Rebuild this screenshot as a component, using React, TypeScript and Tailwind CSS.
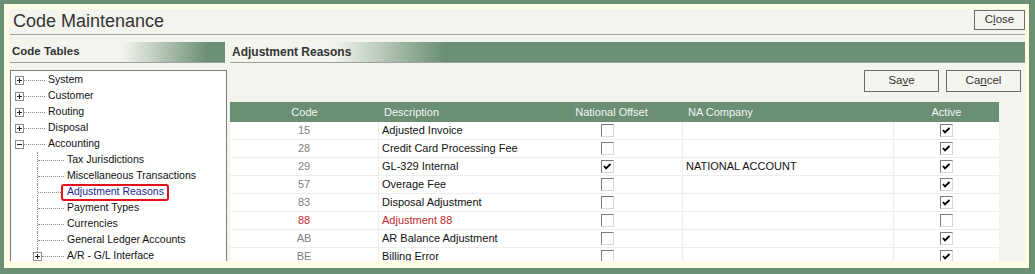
import React from "react";

const FONT = { fontFamily: '"Liberation Sans", Arial, sans-serif' };

function Check({ on }: { on: boolean }) {
  return (
    <div className="w-[13px] h-[13px] bg-white border border-t-[#7a7a7a] border-l-[#7a7a7a] border-r-[#d8d8d8] border-b-[#d8d8d8] flex items-center justify-center">
      {on && (
        <svg width="11" height="11" viewBox="0 0 11 11">
          <polyline points="2,5 4,7.5 8.5,3" fill="none" stroke="#000" strokeWidth="1.8" />
        </svg>
      )}
    </div>
  );
}

function Expander({ open }: { open: boolean }) {
  return (
    <div className="w-[9px] h-[9px] border border-[#8c8c8c] bg-white relative shrink-0">
      <div className="absolute left-[1px] right-[1px] top-[3px] h-[1px] bg-[#222]" />
      {!open && <div className="absolute top-[1px] bottom-[1px] left-[3px] w-[1px] bg-[#222]" />}
    </div>
  );
}

type TreeItem = { label: string; level: 0 | 1; exp?: "open" | "closed"; sel?: boolean };

const tree: TreeItem[] = [
  { label: "System", level: 0, exp: "closed" },
  { label: "Customer", level: 0, exp: "closed" },
  { label: "Routing", level: 0, exp: "closed" },
  { label: "Disposal", level: 0, exp: "closed" },
  { label: "Accounting", level: 0, exp: "open" },
  { label: "Tax Jurisdictions", level: 1 },
  { label: "Miscellaneous Transactions", level: 1 },
  { label: "Adjustment Reasons", level: 1, sel: true },
  { label: "Payment Types", level: 1 },
  { label: "Currencies", level: 1 },
  { label: "General Ledger Accounts", level: 1 },
  { label: "A/R - G/L Interface", level: 1, exp: "closed" },
];

function TreeRow({ item }: { item: TreeItem }) {
  if (item.level === 0) {
    return (
      <div className="h-[16px] shrink-0 flex items-center pl-[4px] text-[10.5px] text-[#111]">
        <Expander open={item.exp === "open"} />
        <div className="w-[21px] border-t border-dotted border-[#8a8a8a]" />
        <span className="ml-[3px] whitespace-nowrap">{item.label}</span>
      </div>
    );
  }
  return (
    <div className="h-[16px] shrink-0 flex items-center text-[10.5px] text-[#111]">
      <div className="w-[26px] shrink-0" />
      <div className="relative w-[1px] h-full shrink-0 border-l border-dotted border-[#8a8a8a]">
        {item.exp && (
          <div className="absolute left-[-5px] top-[3.5px]">
            <Expander open={item.exp === "open"} />
          </div>
        )}
      </div>
      {item.exp ? (
        <div className="ml-[4px] w-[22px] border-t border-dotted border-[#8a8a8a]" />
      ) : (
        <div className={(item.sel ? "w-[23px]" : "w-[26px]") + " border-t border-dotted border-[#8a8a8a]"} />
      )}
      {item.sel ? (
        <span className="h-[17px] flex items-center border-2 border-[#e3111c] rounded-[3px] pl-[4px] pr-[3px] text-[#1c2a96] whitespace-nowrap">
          {item.label}
        </span>
      ) : (
        <span className="ml-[3px] whitespace-nowrap">{item.label}</span>
      )}
    </div>
  );
}

type Row = { code: string; desc: string; nat: boolean; na: string; active: boolean; red?: boolean };

const rows: Row[] = [
  { code: "15", desc: "Adjusted Invoice", nat: false, na: "", active: true },
  { code: "28", desc: "Credit Card Processing Fee", nat: false, na: "", active: true },
  { code: "29", desc: "GL-329 Internal", nat: true, na: "NATIONAL ACCOUNT", active: true },
  { code: "57", desc: "Overage Fee", nat: false, na: "", active: true },
  { code: "83", desc: "Disposal Adjustment", nat: false, na: "", active: true },
  { code: "88", desc: "Adjustment 88", nat: false, na: "", active: false, red: true },
  { code: "AB", desc: "AR Balance Adjustment", nat: false, na: "", active: true },
  { code: "BE", desc: "Billing Error", nat: false, na: "", active: true },
];

function Btn({ children, w }: { children: React.ReactNode; w: string }) {
  return (
    <div className={w + " h-[22px] border border-[#6c6c6c] bg-[#f4f4ef] flex items-center justify-center text-[11.5px] text-[#333]"}>
      {children}
    </div>
  );
}

export default function App() {
  return (
    <div style={FONT} className="w-[1035px] h-[274px] bg-[#6a8f72] pt-[4px] pl-[4px] pr-[6px] pb-[6px]">
      <div className="w-full h-full bg-[#fffde3] pt-[5px] pl-[5px] pr-[4px] pb-[7px]">
        <div className="w-full h-full bg-[#f4f4ef] overflow-hidden flex flex-col">
          {/* Title */}
          <div className="ml-[1px] h-[26px] shrink-0 flex items-start justify-between border-b border-[#a2a2a2]">
            <div className="pl-[3px] pt-[1px] text-[18px] leading-[22px] text-[#333]">Code Maintenance</div>
            <div className="mt-[1px]">
              <div className="w-[51px] h-[20px] border border-[#6c6c6c] bg-[#f4f4ef] flex items-center justify-center text-[11.5px] text-[#333]">
                C<span className="underline">l</span>ose
              </div>
            </div>
          </div>

          <div className="mt-[7px] flex gap-[3px] shrink-0">
            {/* Left column */}
            <div className="ml-[1px] w-[217px] shrink-0 flex flex-col">
              <div className="w-[215px] h-[21px] shrink-0 flex items-center pl-[2px] border-b border-[#a2a2a2] bg-[linear-gradient(to_right,#f4f4ef_52%,#6a8f72_92%)] text-[11.5px] font-bold text-[#333]">
                Code Tables
              </div>
              <div className="mt-[7px] h-[220px] shrink-0 flex flex-col pt-[1px] bg-white border border-[#7c7c7c]">
                {tree.map((t) => (
                  <TreeRow key={t.label} item={t} />
                ))}
              </div>
            </div>

            {/* Right column */}
            <div className="flex-1 flex flex-col">
              <div className="h-[21px] shrink-0 flex items-center pl-[2px] border-b border-[#a2a2a2] bg-[linear-gradient(to_right,#f4f4ef_13%,#6a8f72_27%)] text-[12px] font-bold text-[#333]">
                Adjustment Reasons
              </div>
              <div className="mt-[7px] shrink-0 flex justify-end gap-[7px] pr-[4px]">
                <Btn w="w-[75px]">
                  Sa<span className="underline">v</span>e
                </Btn>
                <Btn w="w-[75px]">
                  Ca<span className="underline">n</span>cel
                </Btn>
              </div>
              <div className="mt-[10px] shrink-0 w-[769px] text-[11px]">
                <div className="h-[20px] bg-[#6a8f72] flex items-center text-[#f2f6f2]">
                  <div className="w-[149px] text-center">Code</div>
                  <div className="w-[161px] pl-[5px]">Description</div>
                  <div className="w-[143px] text-center">National Offset</div>
                  <div className="w-[211px] pl-[5px]">NA Company</div>
                  <div className="w-[105px] text-center">Active</div>
                </div>
                {rows.map((r) => (
                  <div key={r.code} className="h-[18px] bg-white flex items-stretch border-b border-[#ededed]">
                    <div className={"w-[149px] flex items-center justify-center border-r border-[#ededed] " + (r.red ? "text-[#c0282d]" : "text-[#808080]")}>
                      {r.code}
                    </div>
                    <div className={"w-[161px] flex items-center pl-[3px] whitespace-nowrap " + (r.red ? "text-[#c0282d]" : "text-[#111]")}>
                      {r.desc}
                    </div>
                    <div className="w-[143px] flex items-center justify-center pr-[8px] border-r border-[#ededed]">
                      <Check on={r.nat} />
                    </div>
                    <div className="w-[211px] flex items-center pl-[3px] text-[#111] border-r border-[#ededed]">{r.na}</div>
                    <div className="w-[105px] flex items-center justify-center">
                      <Check on={r.active} />
                    </div>
                  </div>
                ))}
              </div>
            </div>
          </div>
        </div>
      </div>
    </div>
  );
}
